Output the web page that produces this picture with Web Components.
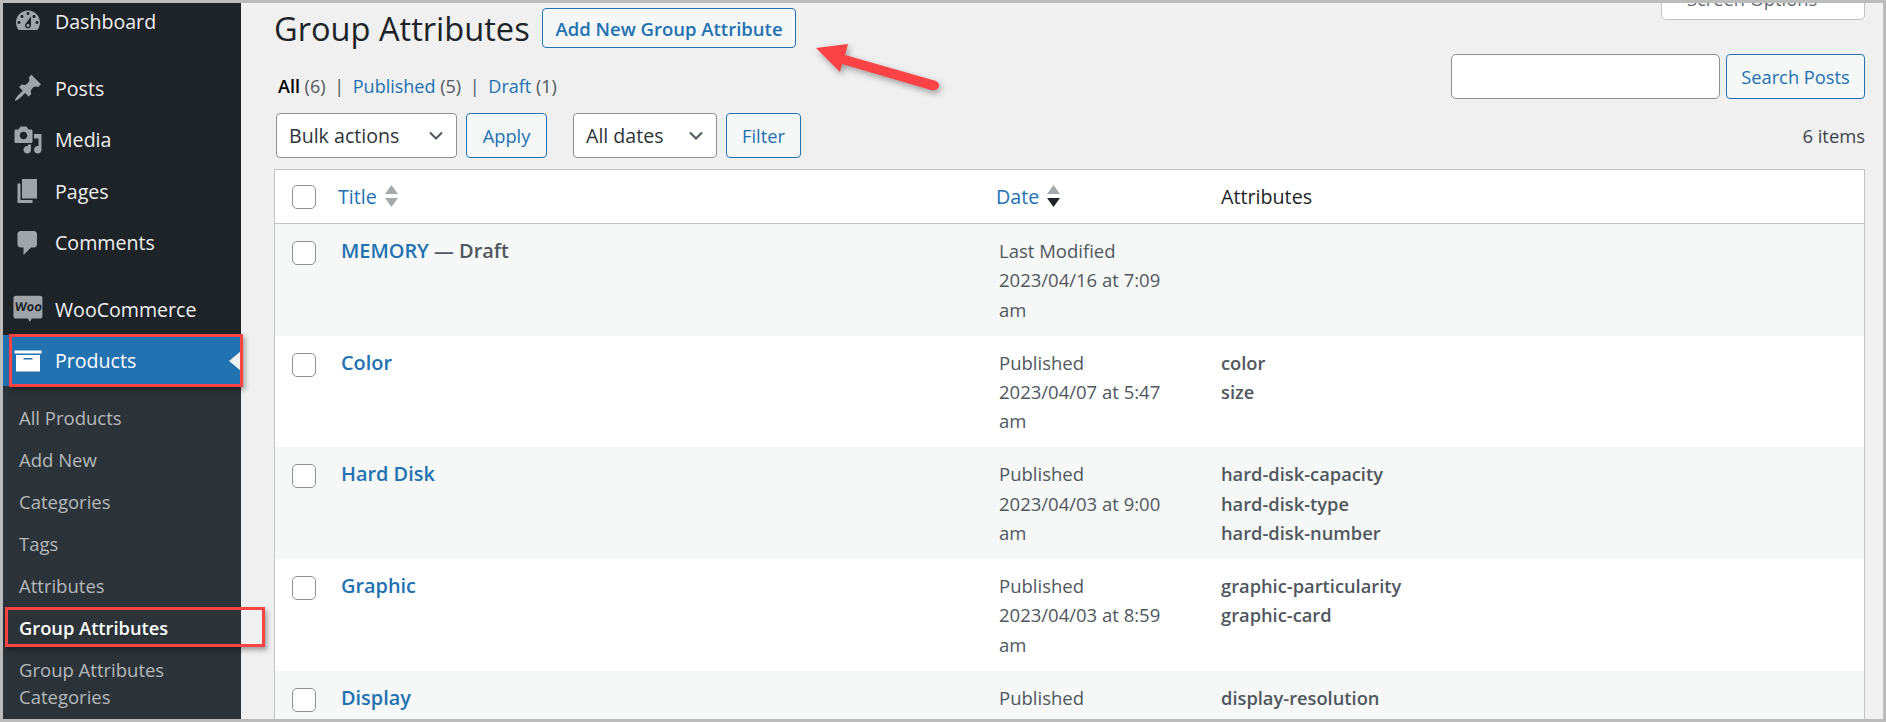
<!DOCTYPE html>
<html lang="en">
<head>
<meta charset="utf-8">
<title>Group Attributes</title>
<style>
  html, body { margin: 0; padding: 0; overflow: hidden; }
  body { font-family: "Open Sans", "Noto Sans", sans-serif; font-size: 18.3px; color: #3c434a; }
</style>
</head>
<body>
<wp-admin>
  <wp-menu slot="menu">
    <wp-menu-item icon="dashboard" first>Dashboard</wp-menu-item>
    <wp-menu-item icon="post" gap="15.5">Posts</wp-menu-item>
    <wp-menu-item icon="media">Media</wp-menu-item>
    <wp-menu-item icon="pages">Pages</wp-menu-item>
    <wp-menu-item icon="comments">Comments</wp-menu-item>
    <wp-menu-item icon="woo" gap="15">WooCommerce</wp-menu-item>
    <wp-menu-item icon="archive" current>Products</wp-menu-item>
    <wp-submenu>
      <wp-submenu-item>All Products</wp-submenu-item>
      <wp-submenu-item>Add New</wp-submenu-item>
      <wp-submenu-item>Categories</wp-submenu-item>
      <wp-submenu-item>Tags</wp-submenu-item>
      <wp-submenu-item>Attributes</wp-submenu-item>
      <wp-submenu-item current>Group Attributes</wp-submenu-item>
      <wp-submenu-item>Group Attributes<br>Categories</wp-submenu-item>
    </wp-submenu>
  </wp-menu>
  <wp-list-page>
    <wp-posts-table>
      <wp-post-row title="MEMORY" state="Draft" status="Last Modified" date="2023/04/16 at 7:09 am"></wp-post-row>
      <wp-post-row title="Color" status="Published" date="2023/04/07 at 5:47 am" attrs="color,size"></wp-post-row>
      <wp-post-row title="Hard Disk" status="Published" date="2023/04/03 at 9:00 am" attrs="hard-disk-capacity,hard-disk-type,hard-disk-number"></wp-post-row>
      <wp-post-row title="Graphic" status="Published" date="2023/04/03 at 8:59 am" attrs="graphic-particularity,graphic-card"></wp-post-row>
      <wp-post-row title="Display" status="Published" date="2023/04/03 at 8:58 am" attrs="display-resolution"></wp-post-row>
    </wp-posts-table>
  </wp-list-page>
</wp-admin>
<wp-annotations></wp-annotations>

<script>
const ICONS = {
  dashboard: '<path fill-rule="evenodd" d="M3.76 16h12.48c1.1-1.37 1.76-3.11 1.76-5 0-4.42-3.58-8-8-8s-8 3.58-8 8c0 1.89.66 3.63 1.76 5zM10 4c.55 0 1 .45 1 1s-.45 1-1 1-1-.45-1-1 .45-1 1-1zM6 6c.55 0 1 .45 1 1s-.45 1-1 1-1-.45-1-1 .45-1 1-1zm8 0c.55 0 1 .45 1 1s-.45 1-1 1-1-.45-1-1 .45-1 1-1zm-5.37 5.55L12 7v6c0 1.1-.9 2-2 2s-2-.9-2-2c0-.57.24-1.08.63-1.45zM4 10c.55 0 1 .45 1 1s-.45 1-1 1-1-.45-1-1 .45-1 1-1zm12 0c.55 0 1 .45 1 1s-.45 1-1 1-1-.45-1-1 .45-1 1-1zm-5 3c0-.55-.45-1-1-1s-1 .45-1 1 .45 1 1 1 1-.45 1-1z"/>',
  post: '<path d="M10.44 3.02l1.82-1.82 6.36 6.35-1.83 1.82c-1.05-.68-2.48-.57-3.41.36l-.75.75c-.92.93-1.04 2.35-.35 3.41l-1.83 1.82-2.41-2.41-2.8 2.79c-.42.42-3.38 2.71-3.8 2.29s1.86-3.39 2.28-3.81l2.79-2.79L4.1 9.36l1.83-1.82c1.05.69 2.48.57 3.4-.36l.75-.75c.93-.92 1.05-2.35.36-3.41z"/>',
  media: '<path fill-rule="evenodd" d="M13 11V4c0-.55-.45-1-1-1h-1.67L9 1H5L3.67 3H2c-.55 0-1 .45-1 1v7c0 .55.45 1 1 1h10c.55 0 1-.45 1-1zM7 4.5c1.38 0 2.5 1.12 2.5 2.5S8.38 9.5 7 9.5 4.5 8.38 4.5 7 5.62 4.5 7 4.5zM14 6h5v10.5c0 1.38-1.12 2.5-2.5 2.5S14 17.88 14 16.5s1.12-2.5 2.5-2.5c.17 0 .34.02.5.05V9h-3V6zm-4 8.05V13h2v3.5c0 1.38-1.12 2.5-2.5 2.5S7 17.88 7 16.5 8.12 14 9.5 14c.17 0 .34.02.5.05z"/>',
  pages: '<path d="M6 15V2h10v13H6zm-1 1h8v2H3V5h2v11z"/>',
  comments: '<path d="M5 2h9c1.1 0 2 .9 2 2v7c0 1.1-.9 2-2 2h-2l-5 5v-5H5c-1.1 0-2-.9-2-2V4c0-1.1.9-2 2-2z"/>',
  archive: '<path fill-rule="evenodd" d="M19 3v2H1V3h18zM2 6h16v11H2V6zm11 3V8H7v1h6z" fill="#fff"/>',
  woo: '<path d="M2 1.2h16c1 0 1.6.7 1.6 1.6v12c0 1-.7 1.6-1.6 1.6h-5.4l-1.4 2.2-1.2-2.2H2c-1 0-1.7-.7-1.7-1.6v-12c0-1 .7-1.6 1.7-1.6z"/><text x="10" y="11.4" text-anchor="middle" font-family="Open Sans, sans-serif" font-size="8.2" font-weight="700" fill="#1d2327" transform="skewX(-6) translate(1.2 0)">Woo</text>'
};

class WpAdmin extends HTMLElement {
  constructor() {
    super();
    this.attachShadow({ mode: 'open' });
    this.shadowRoot.innerHTML = `
    <style>
      :host { display: grid; grid-template-columns: 238px 1fr; box-sizing: border-box; width: 1886px; height: 722px; border: 3px solid #bcbcbc; background: #f0f0f1; overflow: hidden; }
    </style>
    <slot name="menu"></slot>
    <slot></slot>`;
  }
}

class WpMenu extends HTMLElement {
  constructor() {
    super();
    this.attachShadow({ mode: 'open' });
    this.shadowRoot.innerHTML = `
    <style>
      :host { display: block; background: #1d2327; height: 716px; overflow: hidden; }
      .inner { margin-top: -7.75px; }
    </style>
    <div class="inner"><slot></slot></div>`;
  }
}

class WpMenuItem extends HTMLElement {
  constructor() {
    super();
    this.attachShadow({ mode: 'open' });
    const icon = this.getAttribute('icon');
    const gap = this.getAttribute('gap') || 0;
    this.shadowRoot.innerHTML = `
    <style>
      :host { display: flex; align-items: center; gap: 12px; height: 51.5px; padding-left: 10px; margin-top: ${gap}px; color: #f0f0f1; font-size: 19.6px; position: relative; }
      :host([current]) { background: #2271b1; color: #fff; }
      :host([current]) svg { fill: #fff; }
      svg { width: 30px; height: 30px; fill: #a0a5aa; flex: none; }
      .notch { display: none; position: absolute; right: 0; top: 16px; border: 10px solid transparent; border-left: 0; border-right: 12px solid #f0f0f1; }
      :host([current]) .notch { display: block; }
    </style>
    <svg viewBox="0 0 20 20">${ICONS[icon] || ''}</svg>
    <span><slot></slot></span>
    <i class="notch"></i>`;
  }
}

class WpSubmenu extends HTMLElement {
  constructor() {
    super();
    this.attachShadow({ mode: 'open' });
    this.shadowRoot.innerHTML = `
    <style>
      :host { display: block; background: #2c3338; padding: 10.5px 0 40px; }
    </style>
    <slot></slot>`;
  }
}

class WpSubmenuItem extends HTMLElement {
  constructor() {
    super();
    this.attachShadow({ mode: 'open' });
    this.shadowRoot.innerHTML = `
    <style>
      :host { display: block; padding: 7.5px 0 7.5px 16px; line-height: 27px; font-size: 18.5px; color: #b4b8bb; }
      :host([current]) { color: #fff; font-weight: 600; font-size: 18.3px; }
    </style>
    <slot></slot>`;
  }
}

class WpButton extends HTMLElement {
  constructor() {
    super();
    this.attachShadow({ mode: 'open' });
    this.shadowRoot.innerHTML = `
    <style>
      :host { display: inline-flex; align-items: center; justify-content: center; box-sizing: border-box; height: 45px; border: 1px solid #2271b1; border-radius: 4px; background: #f6f7f7; color: #2271b1; font-size: 18.3px; white-space: nowrap; }
    </style>
    <slot></slot>`;
  }
}

class WpSelect extends HTMLElement {
  constructor() {
    super();
    this.attachShadow({ mode: 'open' });
    this.shadowRoot.innerHTML = `
    <style>
      :host { display: inline-flex; align-items: center; justify-content: space-between; box-sizing: border-box; height: 45px; padding: 0 12px 0 12px; border: 1px solid #8c8f94; border-radius: 4px; background: #fff; color: #2c3338; font-size: 19.6px; white-space: nowrap; }
      svg { width: 16px; height: 10px; fill: none; stroke: #50575e; stroke-width: 2; }
    </style>
    <span><slot></slot></span>
    <svg viewBox="0 0 16 10"><path d="M2 1.5l6 6 6-6"/></svg>`;
  }
}

class WpCheckbox extends HTMLElement {
  constructor() {
    super();
    this.attachShadow({ mode: 'open' });
    this.shadowRoot.innerHTML = `
    <style>
      :host { display: block; box-sizing: border-box; width: 24px; height: 24px; border: 1px solid #8c8f94; border-radius: 5px; background: #fff; }
    </style>`;
  }
}

class WpSortArrows extends HTMLElement {
  constructor() {
    super();
    this.attachShadow({ mode: 'open' });
    const down = this.hasAttribute('active') ? '#1d2327' : '#a7aaad';
    this.shadowRoot.innerHTML = `
    <style>
      :host { display: inline-block; width: 13px; height: 23px; }
      svg { display: block; }
    </style>
    <svg width="13" height="23" viewBox="0 0 13 23">
      <path d="M6.5 0L13 9H0z" fill="#a7aaad"/>
      <path d="M0 13h13l-6.5 9z" fill="${down}"/>
    </svg>`;
  }
}

class WpListPage extends HTMLElement {
  constructor() {
    super();
    this.attachShadow({ mode: 'open' });
    this.shadowRoot.innerHTML = `
    <style>
      :host { display: block; height: 716px; overflow: hidden; padding: 0 18px 0 33px; }
      .top { display: flex; justify-content: space-between; height: 98px; }
      .head { display: flex; align-items: center; gap: 12px; margin-top: 5px; height: 40px; }
      h1 { margin: 0; width: 256px; font-size: 32.6px; font-weight: 400; color: #1d2327; white-space: nowrap; }
      .add { width: 254px; height: 40px; font-weight: 600; font-size: 18.5px; }
      .views { margin: 24px 0 0 4px; line-height: 29px; font-size: 18px; color: #50575e; white-space: nowrap; }
      .views b { color: #000; font-weight: 600; }
      .views a { color: #2271b1; }
      .views i { font-style: normal; color: #50575e; margin: 0 4px; }
      .right { display: flex; flex-direction: column; align-items: flex-end; }
      .screen { box-sizing: border-box; display: flex; justify-content: center; align-items: flex-end; width: 204px; height: 40px; margin-top: -23px; padding: 0 22px 8px 0; border: 1px solid #c3c4c7; border-top: 0; border-radius: 0 0 5px 5px; background: #fff; color: #646970; font-size: 18.3px; }
      .search { display: flex; gap: 6px; margin-top: 34px; }
      .input { box-sizing: border-box; width: 269px; height: 45px; border: 1px solid #8c8f94; border-radius: 5px; background: #fff; }
      .search wp-button { width: 139px; }
      .bar { display: flex; align-items: center; height: 45px; margin: 12px 0 11px 2px; }
      .bar .spacer { flex: 1; }
      .count { font-size: 18.4px; color: #3c434a; }
    </style>
    <div class="top">
      <div>
        <div class="head"><h1>Group Attributes</h1><wp-button class="add">Add New Group Attribute</wp-button></div>
        <div class="views"><b>All</b> (6) <i>|</i> <a>Published</a> (5) <i>|</i> <a>Draft</a> (1)</div>
      </div>
      <div class="right">
        <div class="screen">Screen Options</div>
        <div class="search"><div class="input"></div><wp-button>Search Posts</wp-button></div>
      </div>
    </div>
    <div class="bar">
      <wp-select style="width:181px">Bulk actions</wp-select>
      <wp-button style="width:81px;margin-left:9px">Apply</wp-button>
      <wp-select style="width:144px;margin-left:26px">All dates</wp-select>
      <wp-button style="width:75px;margin-left:9px">Filter</wp-button>
      <span class="spacer"></span>
      <span class="count">6 items</span>
    </div>
    <slot></slot>`;
  }
}

class WpPostsTable extends HTMLElement {
  constructor() {
    super();
    this.attachShadow({ mode: 'open' });
    this.shadowRoot.innerHTML = `
    <style>
      :host { display: block; border: 1px solid #c3c4c7; background: #fff; }
      header { display: grid; grid-template-columns: 63px 658px 225px 1fr; align-items: center; height: 53px; border-bottom: 1px solid #c3c4c7; font-size: 19.7px; color: #1d2327; }
      header wp-checkbox { margin-left: 17px; }
      .sort { display: flex; align-items: center; gap: 8px; color: #2271b1; }
      ::slotted(wp-post-row:nth-of-type(odd)) { background: #f6f7f7; }
    </style>
    <header>
      <wp-checkbox></wp-checkbox>
      <div class="sort">Title <wp-sort-arrows></wp-sort-arrows></div>
      <div class="sort">Date <wp-sort-arrows active></wp-sort-arrows></div>
      <div>Attributes</div>
    </header>
    <slot></slot>`;
  }
}

class WpPostRow extends HTMLElement {
  constructor() {
    super();
    this.attachShadow({ mode: 'open' });
    const state = this.getAttribute('state');
    const attrs = (this.getAttribute('attrs') || '').split(',').filter(Boolean);
    this.shadowRoot.innerHTML = `
    <style>
      :host { display: grid; grid-template-columns: 66px 657px 223px 1fr; box-sizing: border-box; padding: 12px 0 11.67px; line-height: 29.33px; font-size: 18.3px; color: #50575e; }
      wp-checkbox { margin: 5px 0 0 17px; }
      .title { font-size: 19.9px; font-weight: 600; }
      .title a { color: #2271b1; }
      .date { width: 185px; padding-left: 1px; font-size: 18.5px; }
      .attrs { font-weight: 600; }
    </style>
    <wp-checkbox></wp-checkbox>
    <div class="title"><a>${this.getAttribute('title')}</a>${state ? ' — ' + state : ''}</div>
    <div class="date">${this.getAttribute('status')}<br>${this.getAttribute('date')}</div>
    <div class="attrs">${attrs.join('<br>')}</div>`;
  }
}

// red marks the author drew on top of the screenshot
class WpAnnotations extends HTMLElement {
  constructor() {
    super();
    this.attachShadow({ mode: 'open' });
    this.shadowRoot.innerHTML = `
    <style>
      :host { display: block; position: absolute; left: 0; top: 0; width: 1886px; height: 722px; pointer-events: none; }
      .box { position: absolute; box-sizing: border-box; border: 3px solid #fb4245; box-shadow: 2px 3px 5px rgba(0,0,0,.35); }
      svg { position: absolute; left: 0; top: 0; filter: drop-shadow(2px 3px 3px rgba(0,0,0,.35)); }
    </style>
    <div class="box" style="left:9px;top:334px;width:234px;height:53px"></div>
    <div class="box" style="left:5px;top:607px;width:260px;height:40px"></div>
    <svg width="1886" height="722" viewBox="0 0 1886 722">
      <path d="M816 48L848 44 845 55 936 81Q941 84 938 88 936 91 931 90L842 64 840 72z" fill="#fb4245"/>
    </svg>`;
  }
}

customElements.define('wp-admin', WpAdmin);
customElements.define('wp-menu', WpMenu);
customElements.define('wp-menu-item', WpMenuItem);
customElements.define('wp-submenu', WpSubmenu);
customElements.define('wp-submenu-item', WpSubmenuItem);
customElements.define('wp-button', WpButton);
customElements.define('wp-select', WpSelect);
customElements.define('wp-checkbox', WpCheckbox);
customElements.define('wp-sort-arrows', WpSortArrows);
customElements.define('wp-list-page', WpListPage);
customElements.define('wp-posts-table', WpPostsTable);
customElements.define('wp-post-row', WpPostRow);
customElements.define('wp-annotations', WpAnnotations);
</script>
</body>
</html>
